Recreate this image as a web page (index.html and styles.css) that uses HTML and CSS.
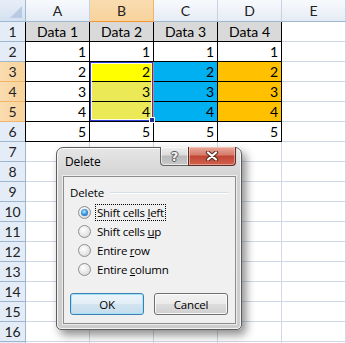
FILE: index.html
```html
<!DOCTYPE html>
<html>
<head>
<meta charset="utf-8">
<link rel="stylesheet" href="styles.css">
</head>
<body>
<div class="app">
  <div class="sheet">
    <div class="corner"><i class="tri"></i></div>
    <div class="ch">A</div><div class="ch sel">B</div><div class="ch">C</div><div class="ch">D</div><div class="ch">E</div>

    <div class="rh">1</div>
    <div class="c d a hd">Data 1</div><div class="c d hd">Data 2</div><div class="c d hd">Data 3</div><div class="c d hd">Data 4</div><div class="c"></div>

    <div class="rh">2</div>
    <div class="c d a n">1</div><div class="c d n">1</div><div class="c d n">1</div><div class="c d n">1</div><div class="c"></div>

    <div class="rh sel">3</div>
    <div class="c d a n">2</div><div class="c d n yel">2</div><div class="c d n cy">2</div><div class="c d n or">2</div><div class="c"></div>

    <div class="rh sel">4</div>
    <div class="c d a n">3</div><div class="c d n ytint">3</div><div class="c d n cy">3</div><div class="c d n or">3</div><div class="c"></div>

    <div class="rh sel">5</div>
    <div class="c d a n">4</div><div class="c d n ytint">4</div><div class="c d n cy">4</div><div class="c d n or">4</div><div class="c"></div>

    <div class="rh">6</div>
    <div class="c d a n">5</div><div class="c d n">5</div><div class="c d n">5</div><div class="c d n">5</div><div class="c"></div>

    <div class="rh">7</div><div class="c"></div><div class="c"></div><div class="c"></div><div class="c"></div><div class="c"></div>
    <div class="rh">8</div><div class="c"></div><div class="c"></div><div class="c"></div><div class="c"></div><div class="c"></div>
    <div class="rh">9</div><div class="c"></div><div class="c"></div><div class="c"></div><div class="c"></div><div class="c"></div>
    <div class="rh">10</div><div class="c"></div><div class="c"></div><div class="c"></div><div class="c"></div><div class="c"></div>
    <div class="rh">11</div><div class="c"></div><div class="c"></div><div class="c"></div><div class="c"></div><div class="c"></div>
    <div class="rh">12</div><div class="c"></div><div class="c"></div><div class="c"></div><div class="c"></div><div class="c"></div>
    <div class="rh">13</div><div class="c"></div><div class="c"></div><div class="c"></div><div class="c"></div><div class="c"></div>
    <div class="rh">14</div><div class="c"></div><div class="c"></div><div class="c"></div><div class="c"></div><div class="c"></div>
    <div class="rh">15</div><div class="c"></div><div class="c"></div><div class="c"></div><div class="c"></div><div class="c"></div>
    <div class="rh">16</div><div class="c"></div><div class="c"></div><div class="c"></div><div class="c"></div><div class="c"></div>
    <div class="rh"></div><div class="c"></div><div class="c"></div><div class="c"></div><div class="c"></div><div class="c"></div>

    <div class="selection"><i class="handle"></i></div>
  </div>

  <div class="dlg">
    <div class="titlebar">
      <span class="title">Delete</span>
      <div class="caps">
        <div class="cap help">?</div>
        <div class="cap close">
          <svg width="14" height="10" viewBox="0 0 14 10">
            <path d="M3 1.5 L11 8.5 M11 1.5 L3 8.5" stroke="#5a2a22" stroke-width="4.2" stroke-linecap="round"/>
            <path d="M3 1.5 L11 8.5 M11 1.5 L3 8.5" stroke="#ffffff" stroke-width="2.2" stroke-linecap="round"/>
          </svg>
        </div>
      </div>
    </div>
    <div class="client">
      <div class="group"><span class="glabel">Delete</span><i class="gline"></i></div>
      <div class="opts">
        <div class="opt"><i class="radio on"></i><span class="lbl focus">Shift cells <u>l</u>eft</span></div>
        <div class="opt"><i class="radio"></i><span class="lbl">Shift cells <u>u</u>p</span></div>
        <div class="opt"><i class="radio"></i><span class="lbl">Entire <u>r</u>ow</span></div>
        <div class="opt"><i class="radio"></i><span class="lbl">Entire <u>c</u>olumn</span></div>
      </div>
      <div class="btns">
        <div class="btn def">OK</div>
        <div class="btn">Cancel</div>
      </div>
    </div>
  </div>
</div>
</body>
</html>
```

FILE: styles.css
```css
html, body {
  margin: 0;
  padding: 0;
  background: #ffffff;
  overflow: hidden;
}
.app {
  position: relative;
  width: 346px;
  height: 343px;
  overflow: hidden;
}
.sheet {
  position: relative;
  display: grid;
  grid-template-columns: 26px 64px 64px 64px 64px 64px;
  grid-template-rows: 22px repeat(17, 20px);
  font-family: Lato, "Liberation Sans", sans-serif;
  font-size: 14px;
  color: #000;
}
.sheet > div {
  box-sizing: border-box;
}
.corner {
  position: relative;
  background: linear-gradient(#e7eef8, #d5e1f1);
  border-right: 1px solid #9eb6ce;
  border-bottom: 1px solid #9eb6ce;
}
.tri {
  position: absolute;
  right: 3px;
  bottom: 3px;
  width: 0;
  height: 0;
  border-left: 12px solid transparent;
  border-bottom: 12px solid #b9cbe2;
}
.ch {
  background: linear-gradient(#f7f9fc, #e6ecf5);
  border-right: 1px solid #c5d2e3;
  border-bottom: 1px solid #9eb6ce;
  text-align: center;
  line-height: 22px;
  color: #222;
}
.ch.sel {
  background: linear-gradient(#f9dcb0, #f8d39c);
  border-bottom: 1px solid #f29536;
  border-right: 1px solid #f2b468;
}
.rh {
  background: #e4ecf7;
  border-right: 1px solid #9eb6ce;
  border-bottom: 1px solid #9eb6ce;
  text-align: center;
  line-height: 20px;
  color: #222;
}
.rh.sel {
  background: linear-gradient(90deg, #f9dcb0, #f8d39c);
  border-right: 1px solid #f29536;
  border-bottom: 1px solid #f2b468;
}
.c {
  border-right: 1px solid #d0d7e5;
  border-bottom: 1px solid #d0d7e5;
  line-height: 20px;
  white-space: nowrap;
  overflow: hidden;
}
.c.d {
  border-right-color: #000;
  border-bottom-color: #000;
}
.c.a {
  box-shadow: -1px 0 0 #000;
}
.hd {
  background: #d9d9d9;
  text-align: center;
}
.n {
  text-align: right;
  padding-right: 3px;
}
.yel { background: #ffff00; }
.ytint { background: #ebe956; }
.cy { background: #00b0f0; }
.or { background: #ffc000; }

.selection {
  position: absolute;
  left: 90px;
  top: 62px;
  width: 63px;
  height: 59px;
  box-sizing: border-box;
  border: 1px solid #2b3fd6;
  box-shadow: inset 0 0 0 1px rgba(255,255,255,0.85), 1px 0 0 #ef7d3f;
}
.handle {
  position: absolute;
  right: -3px;
  bottom: -3px;
  width: 4px;
  height: 4px;
  background: #1c2a8c;
  border: 1px solid #fff;
}

/* dialog */
.dlg {
  position: absolute;
  left: 56px;
  top: 147px;
  width: 186px;
  height: 183px;
  box-sizing: border-box;
  border: 1px solid #5d5d5d;
  border-radius: 7px 7px 5px 5px;
  background: linear-gradient(#e6e6e6, #d2d2d2 30px, #cdcdcd);
  box-shadow: inset 0 0 0 1px rgba(255,255,255,0.75), 4px 5px 10px rgba(0,0,0,0.45);
  display: flex;
  flex-direction: column;
  padding: 0 5px 5px 6px;
  font-family: "Open Sans", "Noto Sans", sans-serif;
  font-size: 11.5px;
  color: #000;
}
.titlebar {
  height: 28px;
  display: flex;
  align-items: flex-start;
  justify-content: space-between;
}
.title {
  margin-top: 5px;
  margin-left: 2px;
  font-size: 12px;
  letter-spacing: -0.1px;
}
.caps {
  display: flex;
  margin-top: -1px;
  margin-right: 0;
}
.cap {
  height: 19px;
  box-sizing: border-box;
  border: 1px solid #646464;
  border-top: none;
  display: flex;
  align-items: center;
  justify-content: center;
}
.help {
  width: 28px;
  border-radius: 0 0 0 4px;
  background: linear-gradient(#f0f0f0, #dcdcdc 45%, #b9b9b9 50%, #c9c9c9);
  box-shadow: inset 0 0 0 1px rgba(255,255,255,0.6);
  font-family: "DejaVu Sans", sans-serif;
  font-weight: bold;
  font-size: 13px;
  color: #f4f4f4;
  text-shadow: -1px 0 0 #555, 1px 0 0 #555, 0 -1px 0 #555, 0 1px 0 #555;
  border-right: none;
}
.close {
  width: 48px;
  border-radius: 0 0 4px 0;
  border-color: #5a2f2a;
  background: linear-gradient(#e9a99b, #d57a69 45%, #c24432 50%, #d0624c);
  box-shadow: inset 0 0 0 1px rgba(255,220,210,0.5);
}
.client {
  flex: 1;
  background: #f0f0f0;
  border: 1px solid #8c8c8c;
  box-shadow: 0 0 0 1px rgba(255,255,255,0.6);
  display: flex;
  flex-direction: column;
  padding: 7px 6px 0 5px;
}
.group {
  display: flex;
  align-items: center;
  height: 16px;
}
.glabel {
  margin-left: 1px;
  letter-spacing: -0.1px;
}
.gline {
  flex: 1;
  height: 1px;
  margin-left: 6px;
  background: #d5dfe5;
  box-shadow: 0 1px 0 #fff;
}
.opts {
  display: flex;
  flex-direction: column;
  margin-top: 3px;
}
.opt {
  height: 19px;
  display: flex;
  align-items: center;
  padding-left: 9px;
}
.radio {
  width: 13px;
  height: 13px;
  box-sizing: border-box;
  border-radius: 50%;
  border: 1px solid #8f8f8f;
  background: radial-gradient(circle at 40% 35%, #ffffff, #e9e9e9 50%, #cfcfcf);
  position: relative;
  flex: none;
}
.radio.on::after {
  content: "";
  position: absolute;
  left: 2px;
  top: 2px;
  width: 7px;
  height: 7px;
  border-radius: 50%;
  background: radial-gradient(circle at 45% 40%, #c7ebff, #3b9ae0 45%, #174d95);
}
.lbl {
  margin-left: 4px;
  padding: 0 1px;
  line-height: 15px;
  letter-spacing: -0.25px;
  border: 1px solid transparent;
}
.lbl.focus {
  border: 1px dotted #000;
}
.btns {
  display: flex;
  gap: 10px;
  margin-top: 14px;
  padding-left: 1px;
}
.btn {
  width: 74px;
  height: 22px;
  box-sizing: border-box;
  border: 1px solid #707070;
  border-radius: 3px;
  background: linear-gradient(#f2f2f2, #ebebeb 48%, #dddddd 52%, #cfcfcf);
  box-shadow: inset 0 0 0 1px rgba(255,255,255,0.8);
  display: flex;
  align-items: center;
  justify-content: center;
  letter-spacing: -0.2px;
}
.btn.def {
  border-color: #3c7fb1;
  box-shadow: inset 0 0 0 1px #a6e3fb;
  background: linear-gradient(#eaf4fa, #e2eef6 48%, #d2e4f0 52%, #c6dcec);
}
```
